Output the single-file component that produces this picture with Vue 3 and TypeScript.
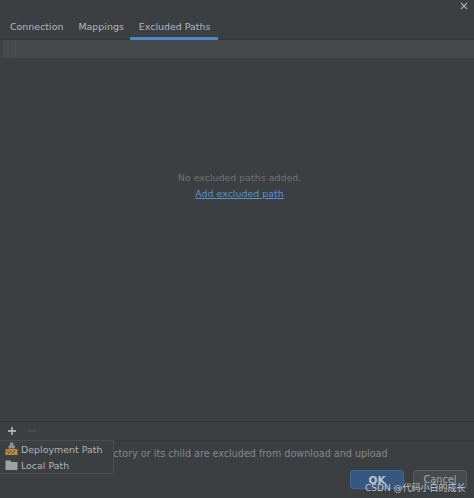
<script setup lang="ts">
const tabs: string[] = ['Connection', 'Mappings', 'Excluded Paths']
const active = 'Excluded Paths'
</script>

<template>
  <div class="dialog">
    <button class="close" aria-label="Close">
      <svg width="8" height="8" viewBox="0 0 8 8"><path d="M1 1l6 6M7 1L1 7" stroke="#a9acae" stroke-width="1.1" fill="none" /></svg>
    </button>
    <nav class="tabs">
      <span v-for="t in tabs" :key="t" class="tab" :class="{ active: t === active }">{{ t }}</span>
    </nav>
    <div class="table-head"><i class="cell-a"></i><i class="cell-b"></i></div>
    <main class="empty">
      <p class="empty-text">No excluded paths added.</p>
      <a class="empty-link">Add excluded path</a>
    </main>
    <div class="toolbar">
      <svg width="10" height="10" viewBox="0 0 10 10"><path d="M5 1v8M1 5h8" stroke="#c4c7c9" stroke-width="1.4" /></svg>
      <svg class="minus" width="10" height="10" viewBox="0 0 10 10"><path d="M1 5h8" stroke="#55595b" stroke-width="1.2" /></svg>
    </div>
    <div class="note">The directory or its child are excluded from download and upload</div>
    <footer class="footer">
      <button class="btn ok">OK</button>
      <button class="btn cancel">Cancel</button>
    </footer>
    <div class="menu">
      <div class="menu-row">
        <svg width="13" height="14" viewBox="0 0 13 14">
          <path d="M5 0.5h3.5v3H10v3H3.5v-3H5z" fill="#8d9194" />
          <rect x="0.5" y="7" width="12" height="6" fill="#b98a3c" />
          <path d="M2 9h1.5M5 9h1.5M8.5 9H10M3 11h1.5M7 11h1.5" stroke="#4a3d22" stroke-width="1" />
        </svg>
        <span>Deployment Path</span>
      </div>
      <div class="menu-row">
        <svg width="13" height="12" viewBox="0 0 13 12"><path d="M0.5 1.5h5l1 1.5h6v8h-12z" fill="#9ba3aa" /></svg>
        <span>Local Path</span>
      </div>
    </div>
    <div class="watermark">CSDN @代码小白的成长</div>
  </div>
</template>

<style scoped>
.dialog {
  position: relative;
  width: 474px;
  height: 498px;
  background: #3b3f41;
  color: #b4b7b9;
  font-family: "DejaVu Sans", sans-serif;
  font-size: 9.45px;
  display: flex;
  flex-direction: column;
  overflow: hidden;
}
.close {
  position: absolute;
  right: 5px;
  top: 1px;
  width: 10px;
  height: 10px;
  padding: 1px;
  border: 0;
  background: none;
  display: flex;
}
.tabs {
  height: 40px;
  box-sizing: border-box;
  display: flex;
  align-items: flex-end;
  border-bottom: 1px solid #323537;
  flex: none;
  padding-left: 2.5px;
}
.tab {
  height: 25px;
  box-sizing: border-box;
  padding: 6px 7.5px 0;
  line-height: 14px;
  white-space: nowrap;
}
.tab.active {
  border-bottom: 3px solid #4a88c7;
  margin-bottom: -1px;
  height: 26px;
  padding-left: 9px;
  padding-right: 8px;
  margin-left: -1.5px;
}
.table-head {
  height: 18px;
  flex: none;
  background: #45494b;
  display: flex;
}
.cell-a {
  width: 3px;
  background: #3d4143;
}
.cell-b {
  width: 12px;
  border-right: 1px solid #4b4f51;
  background: #45494b;
}
.empty {
  height: 363px;
  flex: none;
  display: flex;
  flex-direction: column;
  align-items: center;
  padding: 112px 0 0 5px;
  box-sizing: border-box;
}
.empty-text {
  margin: 0;
  line-height: 16px;
  color: #6f7375;
}
.empty-link {
  line-height: 15px;
  color: #5a93d4;
  text-decoration: underline;
}
.toolbar {
  height: 19px;
  flex: none;
  box-sizing: border-box;
  border-top: 1px solid #333638;
  display: flex;
  align-items: center;
  gap: 10px;
  padding-left: 7px;
}
.note {
  height: 27px;
  flex: none;
  box-sizing: border-box;
  border-top: 1px solid #333638;
  padding-left: 74px;
  line-height: 26px;
  font-size: 9.6px;
  color: #84888a;
  white-space: nowrap;
}
.footer {
  flex: 1;
  display: flex;
  justify-content: flex-end;
  gap: 9px;
  padding: 3px 7px 0 0;
}
.btn {
  width: 54px;
  height: 19px;
  border-radius: 3px;
  font: 700 10.5px "DejaVu Sans", sans-serif;
  padding: 0;
}
.ok {
  background: #365880;
  border: 1px solid #3f6994;
  color: #c0c6cc;
}
.cancel {
  background: #474b4d;
  border: 1px solid #5a5e60;
  color: #a5a8aa;
  font-weight: 400;
  font-size: 9.8px;
}
.menu {
  position: absolute;
  left: 0;
  top: 440px;
  width: 114px;
  height: 34px;
  box-sizing: border-box;
  background: #3b3f41;
  border: 1px solid #4a4e50;
  border-left: 0;
}
.menu-row {
  height: 16px;
  display: flex;
  align-items: center;
  gap: 3px;
  padding-left: 5px;
  color: #b0b3b5;
  white-space: nowrap;
}
.watermark {
  position: absolute;
  left: 365px;
  top: 481px;
  font-size: 9px;
  line-height: 14px;
  font-family: "DejaVu Sans", "Noto Sans CJK SC", sans-serif;
  color: #c7c9ca;
  white-space: nowrap;
}
</style>
